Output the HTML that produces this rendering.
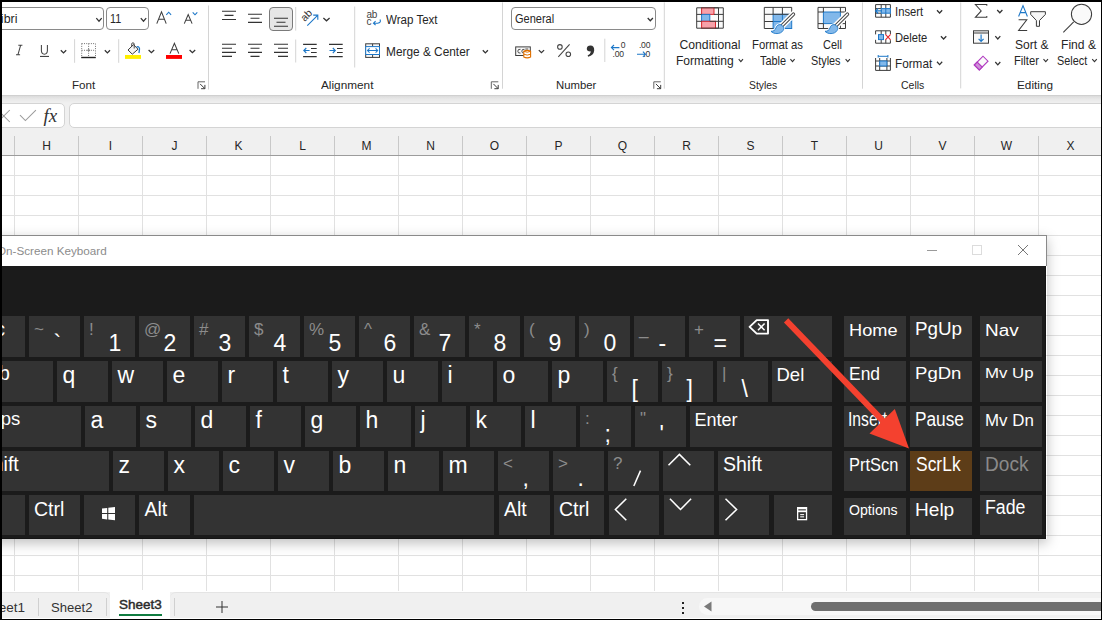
<!DOCTYPE html><html><head><meta charset="utf-8"><style>html,body{margin:0;padding:0}body{width:1102px;height:620px;position:relative;overflow:hidden;background:#fff;font-family:"Liberation Sans",sans-serif}</style></head><body>
<div style="position:absolute;left:14px;top:155px;width:1px;height:436px;background:#e1e1e1"></div>
<div style="position:absolute;left:78px;top:155px;width:1px;height:436px;background:#e1e1e1"></div>
<div style="position:absolute;left:142px;top:155px;width:1px;height:436px;background:#e1e1e1"></div>
<div style="position:absolute;left:206px;top:155px;width:1px;height:436px;background:#e1e1e1"></div>
<div style="position:absolute;left:270px;top:155px;width:1px;height:436px;background:#e1e1e1"></div>
<div style="position:absolute;left:334px;top:155px;width:1px;height:436px;background:#e1e1e1"></div>
<div style="position:absolute;left:398px;top:155px;width:1px;height:436px;background:#e1e1e1"></div>
<div style="position:absolute;left:462px;top:155px;width:1px;height:436px;background:#e1e1e1"></div>
<div style="position:absolute;left:526px;top:155px;width:1px;height:436px;background:#e1e1e1"></div>
<div style="position:absolute;left:590px;top:155px;width:1px;height:436px;background:#e1e1e1"></div>
<div style="position:absolute;left:654px;top:155px;width:1px;height:436px;background:#e1e1e1"></div>
<div style="position:absolute;left:718px;top:155px;width:1px;height:436px;background:#e1e1e1"></div>
<div style="position:absolute;left:782px;top:155px;width:1px;height:436px;background:#e1e1e1"></div>
<div style="position:absolute;left:846px;top:155px;width:1px;height:436px;background:#e1e1e1"></div>
<div style="position:absolute;left:910px;top:155px;width:1px;height:436px;background:#e1e1e1"></div>
<div style="position:absolute;left:974px;top:155px;width:1px;height:436px;background:#e1e1e1"></div>
<div style="position:absolute;left:1038px;top:155px;width:1px;height:436px;background:#e1e1e1"></div>
<div style="position:absolute;left:1102px;top:155px;width:1px;height:436px;background:#e1e1e1"></div>
<div style="position:absolute;left:0;top:175px;width:1102px;height:1px;background:#e1e1e1"></div>
<div style="position:absolute;left:0;top:195px;width:1102px;height:1px;background:#e1e1e1"></div>
<div style="position:absolute;left:0;top:215px;width:1102px;height:1px;background:#e1e1e1"></div>
<div style="position:absolute;left:0;top:235px;width:1102px;height:1px;background:#e1e1e1"></div>
<div style="position:absolute;left:0;top:255px;width:1102px;height:1px;background:#e1e1e1"></div>
<div style="position:absolute;left:0;top:275px;width:1102px;height:1px;background:#e1e1e1"></div>
<div style="position:absolute;left:0;top:295px;width:1102px;height:1px;background:#e1e1e1"></div>
<div style="position:absolute;left:0;top:315px;width:1102px;height:1px;background:#e1e1e1"></div>
<div style="position:absolute;left:0;top:335px;width:1102px;height:1px;background:#e1e1e1"></div>
<div style="position:absolute;left:0;top:355px;width:1102px;height:1px;background:#e1e1e1"></div>
<div style="position:absolute;left:0;top:375px;width:1102px;height:1px;background:#e1e1e1"></div>
<div style="position:absolute;left:0;top:395px;width:1102px;height:1px;background:#e1e1e1"></div>
<div style="position:absolute;left:0;top:415px;width:1102px;height:1px;background:#e1e1e1"></div>
<div style="position:absolute;left:0;top:435px;width:1102px;height:1px;background:#e1e1e1"></div>
<div style="position:absolute;left:0;top:455px;width:1102px;height:1px;background:#e1e1e1"></div>
<div style="position:absolute;left:0;top:475px;width:1102px;height:1px;background:#e1e1e1"></div>
<div style="position:absolute;left:0;top:495px;width:1102px;height:1px;background:#e1e1e1"></div>
<div style="position:absolute;left:0;top:515px;width:1102px;height:1px;background:#e1e1e1"></div>
<div style="position:absolute;left:0;top:535px;width:1102px;height:1px;background:#e1e1e1"></div>
<div style="position:absolute;left:0;top:555px;width:1102px;height:1px;background:#e1e1e1"></div>
<div style="position:absolute;left:0;top:575px;width:1102px;height:1px;background:#e1e1e1"></div>
<div style="position:absolute;left:0;top:95px;width:1102px;height:60px;background:#f0f0f0"></div>
<div style="position:absolute;left:0;top:95px;width:1102px;height:8px;background:linear-gradient(#c8c8c8 0px,#dcdcdc 1.2px,#e8e8e8 4px,#f0f0f0 8px)"></div>
<div style="position:absolute;left:-10px;top:103.3px;width:74.5px;height:25px;background:#fff;border:1px solid #d4d4d4;border-radius:5px;box-sizing:border-box"></div>
<div style="position:absolute;left:69px;top:103.3px;width:1100px;height:25px;background:#fff;border:1px solid #d4d4d4;border-radius:5px;box-sizing:border-box"></div>
<svg style="position:absolute;left:0;top:0" width="70" height="135"><path d="M-2.2 110 L9.8 122 M9.8 110 L-2.2 122" stroke="#9c9c9c" stroke-width="1.05" fill="none"/><path d="M20 115.2 L25.4 120.6 L35.9 110.2" stroke="#9c9c9c" stroke-width="1.05" fill="none"/></svg>
<div style="position:absolute;left:43.5px;top:105.5px;font:italic 19px 'Liberation Serif', serif;color:#333;line-height:1">fx</div>
<div style="position:absolute;left:14.5px;top:140px;width:64px;text-align:center;font:12px 'Liberation Sans', sans-serif;color:#262626;line-height:1">H</div>
<div style="position:absolute;left:78.5px;top:140px;width:64px;text-align:center;font:12px 'Liberation Sans', sans-serif;color:#262626;line-height:1">I</div>
<div style="position:absolute;left:142.5px;top:140px;width:64px;text-align:center;font:12px 'Liberation Sans', sans-serif;color:#262626;line-height:1">J</div>
<div style="position:absolute;left:206.5px;top:140px;width:64px;text-align:center;font:12px 'Liberation Sans', sans-serif;color:#262626;line-height:1">K</div>
<div style="position:absolute;left:270.5px;top:140px;width:64px;text-align:center;font:12px 'Liberation Sans', sans-serif;color:#262626;line-height:1">L</div>
<div style="position:absolute;left:334.5px;top:140px;width:64px;text-align:center;font:12px 'Liberation Sans', sans-serif;color:#262626;line-height:1">M</div>
<div style="position:absolute;left:398.5px;top:140px;width:64px;text-align:center;font:12px 'Liberation Sans', sans-serif;color:#262626;line-height:1">N</div>
<div style="position:absolute;left:462.5px;top:140px;width:64px;text-align:center;font:12px 'Liberation Sans', sans-serif;color:#262626;line-height:1">O</div>
<div style="position:absolute;left:526.5px;top:140px;width:64px;text-align:center;font:12px 'Liberation Sans', sans-serif;color:#262626;line-height:1">P</div>
<div style="position:absolute;left:590.5px;top:140px;width:64px;text-align:center;font:12px 'Liberation Sans', sans-serif;color:#262626;line-height:1">Q</div>
<div style="position:absolute;left:654.5px;top:140px;width:64px;text-align:center;font:12px 'Liberation Sans', sans-serif;color:#262626;line-height:1">R</div>
<div style="position:absolute;left:718.5px;top:140px;width:64px;text-align:center;font:12px 'Liberation Sans', sans-serif;color:#262626;line-height:1">S</div>
<div style="position:absolute;left:782.5px;top:140px;width:64px;text-align:center;font:12px 'Liberation Sans', sans-serif;color:#262626;line-height:1">T</div>
<div style="position:absolute;left:846.5px;top:140px;width:64px;text-align:center;font:12px 'Liberation Sans', sans-serif;color:#262626;line-height:1">U</div>
<div style="position:absolute;left:910.5px;top:140px;width:64px;text-align:center;font:12px 'Liberation Sans', sans-serif;color:#262626;line-height:1">V</div>
<div style="position:absolute;left:974.5px;top:140px;width:64px;text-align:center;font:12px 'Liberation Sans', sans-serif;color:#262626;line-height:1">W</div>
<div style="position:absolute;left:1038.5px;top:140px;width:64px;text-align:center;font:12px 'Liberation Sans', sans-serif;color:#262626;line-height:1">X</div>
<div style="position:absolute;left:14px;top:136px;width:1px;height:19px;background:#c8c8c8"></div>
<div style="position:absolute;left:78px;top:136px;width:1px;height:19px;background:#c8c8c8"></div>
<div style="position:absolute;left:142px;top:136px;width:1px;height:19px;background:#c8c8c8"></div>
<div style="position:absolute;left:206px;top:136px;width:1px;height:19px;background:#c8c8c8"></div>
<div style="position:absolute;left:270px;top:136px;width:1px;height:19px;background:#c8c8c8"></div>
<div style="position:absolute;left:334px;top:136px;width:1px;height:19px;background:#c8c8c8"></div>
<div style="position:absolute;left:398px;top:136px;width:1px;height:19px;background:#c8c8c8"></div>
<div style="position:absolute;left:462px;top:136px;width:1px;height:19px;background:#c8c8c8"></div>
<div style="position:absolute;left:526px;top:136px;width:1px;height:19px;background:#c8c8c8"></div>
<div style="position:absolute;left:590px;top:136px;width:1px;height:19px;background:#c8c8c8"></div>
<div style="position:absolute;left:654px;top:136px;width:1px;height:19px;background:#c8c8c8"></div>
<div style="position:absolute;left:718px;top:136px;width:1px;height:19px;background:#c8c8c8"></div>
<div style="position:absolute;left:782px;top:136px;width:1px;height:19px;background:#c8c8c8"></div>
<div style="position:absolute;left:846px;top:136px;width:1px;height:19px;background:#c8c8c8"></div>
<div style="position:absolute;left:910px;top:136px;width:1px;height:19px;background:#c8c8c8"></div>
<div style="position:absolute;left:974px;top:136px;width:1px;height:19px;background:#c8c8c8"></div>
<div style="position:absolute;left:1038px;top:136px;width:1px;height:19px;background:#c8c8c8"></div>
<div style="position:absolute;left:1102px;top:136px;width:1px;height:19px;background:#c8c8c8"></div>
<div style="position:absolute;left:0;top:155px;width:1102px;height:1px;background:#9c9c9c"></div>
<div style="position:absolute;left:0;top:0;width:1102px;height:95px;background:#fff"></div>
<div style="position:absolute;left:-30px;top:7.2px;width:133.5px;height:23.3px;border:1px solid #8a8a8a;border-radius:4px;box-sizing:border-box;background:#fff"></div>
<div style="position:absolute;left:-17.73px;top:13.00px;font-size:12.4px;line-height:1;color:#262626;white-space:nowrap;">Calibri</div>
<div style="position:absolute;left:106px;top:7.2px;width:42.6px;height:23.3px;border:1px solid #8a8a8a;border-radius:4px;box-sizing:border-box;background:#fff"></div>
<div style="position:absolute;left:109.60px;top:13.00px;font-size:12.4px;line-height:1;color:#262626;white-space:nowrap;transform:scaleX(0.870);transform-origin:0 0;">11</div>
<div style="position:absolute;left:71.60px;top:80.00px;font-size:11.4px;line-height:1;color:#262626;white-space:nowrap;transform:scaleX(1.020);transform-origin:0 0;">Font</div>
<div style="position:absolute;left:269px;top:7px;width:23.5px;height:23.6px;background:#e6e6e6;border:1px solid #7a7a7a;border-radius:4px;box-sizing:border-box"></div>
<div style="position:absolute;left:298.4px;top:6.8px;width:16px;height:16px;transform:rotate(-45deg);transform-origin:50% 50%;font-size:10.5px;line-height:16px;color:#333;text-align:center">ab</div>
<div style="position:absolute;left:366.6px;top:9.6px;font-size:10px;line-height:1;color:#444;letter-spacing:-0.3px">ab</div>
<div style="position:absolute;left:366.6px;top:16.8px;font-size:10px;line-height:1;color:#444">c</div>
<div style="position:absolute;left:385.60px;top:14.00px;font-size:12.3px;line-height:1;color:#262626;white-space:nowrap;transform:scaleX(0.939);transform-origin:0 0;">Wrap Text</div>
<div style="position:absolute;left:385.60px;top:46.00px;font-size:12.2px;line-height:1;color:#262626;white-space:nowrap;transform:scaleX(0.973);transform-origin:0 0;">Merge &amp; Center</div>
<div style="position:absolute;left:321.10px;top:80.00px;font-size:11.4px;line-height:1;color:#262626;white-space:nowrap;transform:scaleX(1.035);transform-origin:0 0;">Alignment</div>
<div style="position:absolute;left:511.2px;top:7.3px;width:145.3px;height:23.1px;border:1px solid #8a8a8a;border-radius:4px;box-sizing:border-box;background:#fff"></div>
<div style="position:absolute;left:514.50px;top:13.00px;font-size:12.3px;line-height:1;color:#262626;white-space:nowrap;transform:scaleX(0.894);transform-origin:0 0;">General</div>
<div style="position:absolute;left:620.8px;top:41.4px;font-size:8.6px;line-height:1;color:#333">0</div>
<div style="position:absolute;left:612.6px;top:49.6px;font-size:8.6px;line-height:1;color:#333;letter-spacing:-0.2px">.00</div>
<div style="position:absolute;left:638.9px;top:41.4px;font-size:8.6px;line-height:1;color:#333;letter-spacing:-0.2px">.00</div>
<div style="position:absolute;left:643.2px;top:49.6px;font-size:8.6px;line-height:1;color:#333;letter-spacing:-0.2px">.0</div>
<div style="position:absolute;left:555.60px;top:80.00px;font-size:11.4px;line-height:1;color:#262626;white-space:nowrap;transform:scaleX(0.993);transform-origin:0 0;">Number</div>
<div style="position:absolute;left:679.50px;top:39.00px;font-size:12.2px;line-height:1;color:#262626;white-space:nowrap;">Conditional</div>
<div style="position:absolute;left:675.50px;top:55.00px;font-size:12.2px;line-height:1;color:#262626;white-space:nowrap;transform:scaleX(0.990);transform-origin:0 0;">Formatting</div>
<div style="position:absolute;left:752.40px;top:39.00px;font-size:12.2px;line-height:1;color:#262626;white-space:nowrap;transform:scaleX(0.929);transform-origin:0 0;">Format as</div>
<div style="position:absolute;left:759.70px;top:55.00px;font-size:12.2px;line-height:1;color:#262626;white-space:nowrap;transform:scaleX(0.896);transform-origin:0 0;">Table</div>
<div style="position:absolute;left:822.60px;top:39.00px;font-size:12.2px;line-height:1;color:#262626;white-space:nowrap;transform:scaleX(0.899);transform-origin:0 0;">Cell</div>
<div style="position:absolute;left:811.00px;top:55.00px;font-size:12.2px;line-height:1;color:#262626;white-space:nowrap;transform:scaleX(0.890);transform-origin:0 0;">Styles</div>
<div style="position:absolute;left:749.30px;top:80.00px;font-size:11.4px;line-height:1;color:#262626;white-space:nowrap;transform:scaleX(0.906);transform-origin:0 0;">Styles</div>
<div style="position:absolute;left:895.40px;top:6.00px;font-size:12.2px;line-height:1;color:#262626;white-space:nowrap;transform:scaleX(0.924);transform-origin:0 0;">Insert</div>
<div style="position:absolute;left:895.40px;top:32.00px;font-size:12.2px;line-height:1;color:#262626;white-space:nowrap;transform:scaleX(0.916);transform-origin:0 0;">Delete</div>
<div style="position:absolute;left:895.40px;top:58.00px;font-size:12.2px;line-height:1;color:#262626;white-space:nowrap;transform:scaleX(0.963);transform-origin:0 0;">Format</div>
<div style="position:absolute;left:900.60px;top:80.00px;font-size:11.4px;line-height:1;color:#262626;white-space:nowrap;transform:scaleX(0.919);transform-origin:0 0;">Cells</div>
<div style="position:absolute;left:1015.10px;top:39.00px;font-size:12.2px;line-height:1;color:#262626;white-space:nowrap;transform:scaleX(0.988);transform-origin:0 0;">Sort &amp;</div>
<div style="position:absolute;left:1013.80px;top:55.00px;font-size:12.2px;line-height:1;color:#262626;white-space:nowrap;transform:scaleX(0.921);transform-origin:0 0;">Filter</div>
<div style="position:absolute;left:1060.60px;top:39.00px;font-size:12.2px;line-height:1;color:#262626;white-space:nowrap;transform:scaleX(0.992);transform-origin:0 0;">Find &amp;</div>
<div style="position:absolute;left:1057.40px;top:55.00px;font-size:12.2px;line-height:1;color:#262626;white-space:nowrap;transform:scaleX(0.891);transform-origin:0 0;">Select</div>
<div style="position:absolute;left:1017.40px;top:80.00px;font-size:11.4px;line-height:1;color:#262626;white-space:nowrap;transform:scaleX(1.033);transform-origin:0 0;">Editing</div>
<svg style="position:absolute;left:0;top:0" width="1102" height="95"><path d="M96.3 18.2 L99.0 21.2 L101.7 18.2" fill="none" stroke="#333" stroke-width="1.25"/><path d="M140.8 18.2 L143.5 21.2 L146.2 18.2" fill="none" stroke="#333" stroke-width="1.25"/><path d="M156.8 23.6 L161.5 11.8 L166.2 23.6 M158.5 19.3 H164.5" fill="none" stroke="#3c3c3c" stroke-width="1.05"/><path d="M166.3 14.8 L168.7 12.2 L171.1 14.8" fill="none" stroke="#1e78c8" stroke-width="1.1"/><path d="M184.3 23.6 L188.2 14.6 L192.1 23.6 M185.7 20.2 H190.7" fill="none" stroke="#3c3c3c" stroke-width="1.05"/><path d="M192.7 12.3 L195 14.8 L197.3 12.3" fill="none" stroke="#1e78c8" stroke-width="1.1"/><path d="M18.3 45.3 H22.4 M16 54.8 H20.1 M20.6 45.3 L17.9 54.8" fill="none" stroke="#444" stroke-width="1.05"/><path d="M41.4 45 V50.6 Q41.4 54.2 44.4 54.2 Q47.4 54.2 47.4 50.6 V45" fill="none" stroke="#444" stroke-width="1.05"/><rect x="40" y="55.9" width="9" height="1.1" fill="#444"/><path d="M60.8 50.2 L63.5 52.9 L66.2 50.2" fill="none" stroke="#333" stroke-width="1.25"/><rect x="74.1" y="39.2" width="1" height="23.6" fill="#d4d4d4"/><path d="M81.7 43.6 H95.5 V56.5 M81.7 43.6 V56.5 M88.6 43.6 V56.5 M81.7 50.3 H95.5" fill="none" stroke="#555" stroke-width="0.9" stroke-dasharray="0.9 1.4"/><circle cx="88.6" cy="50.3" r="0.9" fill="none" stroke="#555" stroke-width="0.6"/><rect x="81.2" y="56.8" width="14.6" height="1.4" fill="#222"/><path d="M104.8 50.2 L107.4 52.9 L110 50.2" fill="none" stroke="#333" stroke-width="1.25"/><rect x="118.2" y="39.2" width="1" height="23.6" fill="#d4d4d4"/><path d="M128 50 L133.5 44.6 L138 49.2 L132.3 54.2 Z" fill="#f4f4f4" stroke="#3c3c3c" stroke-width="1"/><path d="M131.7 46.3 V43.9 Q131.8 42.7 133 42.8 Q134.2 42.9 134.2 44 V48.5" fill="none" stroke="#3c3c3c" stroke-width="0.9"/><path d="M136.6 47.3 Q138.6 45.6 139.5 48.6 Q139.4 51 138.9 53" fill="none" stroke="#1e78c8" stroke-width="1.3"/><rect x="125" y="55" width="16" height="3.9" fill="#ffef00"/><path d="M148.6 50 L151.39999999999998 52.7 L154.2 50" fill="none" stroke="#333" stroke-width="1.25"/><path d="M170 53.6 L174.4 43.3 L178.8 53.6 M171.6 49.8 H177.2" fill="none" stroke="#3c3c3c" stroke-width="1.05"/><rect x="166" y="55" width="16" height="3.9" fill="#ff0000"/><path d="M189.6 50 L192.39999999999998 52.7 L195.2 50" fill="none" stroke="#333" stroke-width="1.25"/><path d="M198.0 88.8 V81.8 H205.0" fill="none" stroke="#555" stroke-width="0.9"/><path d="M200.1 83.89999999999999 L204.8 88.6 M201.1 88.7 H204.9 V84.89999999999999" fill="none" stroke="#333" stroke-width="0.95"/><rect x="208" y="5.5" width="1" height="84" fill="#d4d4d4"/><path d="M222 11.3 H236 M224.5 15.4 H233.5 M222 19.5 H236" stroke="#333" stroke-width="1.1" fill="none"/><path d="M248 14.2 H262 M250.5 18.3 H259.5 M248 22.4 H262" stroke="#333" stroke-width="1.1" fill="none"/><path d="M274 18.2 H288 M276.5 22.2 H285.5 M274 26.2 H288" stroke="#333" stroke-width="1.1" fill="none"/><rect x="295.2" y="7" width="1" height="23.6" fill="#d4d4d4"/><path d="M307.3 25.6 L317.6 15.3 M313.2 15.1 H317.8 V19.7" fill="none" stroke="#1e78c8" stroke-width="1.1"/><path d="M323.4 18 L326.5 20.8 L329.6 18" fill="none" stroke="#333" stroke-width="1.25"/><path d="M222 44.3 H236 M222 48.3 H232 M222 52.4 H236 M222 56.4 H232" stroke="#333" stroke-width="1.1" fill="none"/><path d="M248 44.3 H262 M250.5 48.3 H259.5 M248 52.4 H262 M250.5 56.4 H259.5" stroke="#333" stroke-width="1.1" fill="none"/><path d="M274 44.3 H288 M278 48.3 H288 M274 52.4 H288 M278 56.4 H288" stroke="#333" stroke-width="1.1" fill="none"/><rect x="295.2" y="39.5" width="1" height="23" fill="#d4d4d4"/><path d="M303.1 44.4 H316.7 M311 48.5 H316.7 M311 52.5 H316.7 M303.1 56.6 H316.7" stroke="#333" stroke-width="1.1" fill="none"/><path d="M303.8 50.5 H309.6 M306.3 48 L303.8 50.5 L306.3 53" fill="none" stroke="#1e78c8" stroke-width="1.1"/><path d="M329 44.4 H342.7 M337 48.5 H342.7 M337 52.5 H342.7 M329 56.6 H342.7" stroke="#333" stroke-width="1.1" fill="none"/><path d="M329.5 50.5 H335.3 M332.8 48 L335.3 50.5 L332.8 53" fill="none" stroke="#1e78c8" stroke-width="1.1"/><rect x="354.2" y="6.5" width="1" height="61" fill="#d4d4d4"/><path d="M380 19.4 Q381.5 22.8 377.6 23.2 H373.6 M375.6 21.2 L373.5 23.2 L375.6 25.2" fill="none" stroke="#1e78c8" stroke-width="1.15"/><rect x="365.7" y="43.8" width="13.8" height="13.6" fill="#f8f8f8" stroke="#3c3c3c" stroke-width="1"/><path d="M372.6 43.8 V46.6 M372.6 54.5 V57.4" stroke="#3c3c3c" stroke-width="1"/><rect x="365.7" y="46.6" width="13.8" height="7.9" fill="#fff" stroke="#1e78c8" stroke-width="1"/><path d="M367.5 50.5 H377.7 M369.6 48.4 L367.5 50.5 L369.6 52.6 M375.6 48.4 L377.7 50.5 L375.6 52.6" fill="none" stroke="#1e78c8" stroke-width="1.05"/><path d="M482.8 50.2 L485.35 52.9 L487.9 50.2" fill="none" stroke="#333" stroke-width="1.25"/><path d="M491.3 88.8 V81.8 H498.3" fill="none" stroke="#555" stroke-width="0.9"/><path d="M493.40000000000003 83.89999999999999 L498.1 88.6 M494.40000000000003 88.7 H498.2 V84.89999999999999" fill="none" stroke="#333" stroke-width="0.95"/><rect x="502" y="2.4" width="1" height="86.3" fill="#d4d4d4"/><path d="M647.7 18 L650.3 20.8 L652.9 18" fill="none" stroke="#333" stroke-width="1.25"/><rect x="515.7" y="46.9" width="14.6" height="8.6" fill="#fafafa" stroke="#3c3c3c" stroke-width="1"/><path d="M520.5 49.3 Q517.8 48.9 517.8 51.2 Q517.8 53.4 520.5 53.1 M524.5 49.3 Q521.8 48.9 521.8 51.2 Q521.8 53.4 524.5 53.1 M525.3 49 H528.3" fill="none" stroke="#3c3c3c" stroke-width="0.9"/><path d="M523.8 51.3 Q527.2 49.5 530.6 51.3 V57 Q527.2 58.8 523.8 57 Z" fill="#fff" stroke="#e07000" stroke-width="1.1"/><path d="M523.8 51.3 Q527.2 53.1 530.6 51.3 M523.8 54.2 Q527.2 56 530.6 54.2" fill="none" stroke="#e07000" stroke-width="1"/><path d="M538.8 50.1 L541.45 52.7 L544.1 50.1" fill="none" stroke="#333" stroke-width="1.25"/><circle cx="559.9" cy="46.9" r="2.3" fill="none" stroke="#444" stroke-width="1.05"/><circle cx="568.3" cy="54.2" r="2.3" fill="none" stroke="#444" stroke-width="1.05"/><path d="M569.6 44.3 L558.3 56.8" stroke="#444" stroke-width="1.05"/><path d="M590.4 45.6 Q594.4 45.6 594.2 50.4 Q593.8 55 588.2 56.8 L587.6 55.6 Q590.6 54 591 51.6 Q586.6 51.8 586.8 48.6 Q587 45.6 590.4 45.6 Z" fill="#333"/><rect x="604.3" y="38.7" width="1" height="23.3" fill="#d4d4d4"/><path d="M611.4 47.6 H619.4 M614 45 L611.4 47.6 L614 50.2" fill="none" stroke="#1e78c8" stroke-width="1.1"/><path d="M637 54.3 H645.5 M642.9 51.7 L645.5 54.3 L642.9 56.9" fill="none" stroke="#1e78c8" stroke-width="1.1"/><path d="M653.8 88.8 V81.8 H660.8" fill="none" stroke="#555" stroke-width="0.9"/><path d="M655.9 83.89999999999999 L660.5999999999999 88.6 M656.9 88.7 H660.6999999999999 V84.89999999999999" fill="none" stroke="#333" stroke-width="0.95"/><rect x="663.8" y="2.4" width="1" height="86.3" fill="#d4d4d4"/><rect x="696.7" y="7.8" width="26.6" height="20.4" fill="#fafafa"/><rect x="701.6" y="7.8" width="12.4" height="6.6" fill="#f7a1a9" stroke="#d9262c" stroke-width="1"/><rect x="701.6" y="14.4" width="8.2" height="6.9" fill="#82b8ea" stroke="#1e78c8" stroke-width="1"/><rect x="701.6" y="21.3" width="13.9" height="6.9" fill="#f7a1a9" stroke="#d9262c" stroke-width="1"/><path d="M696.7 7.8 H723.3 V28.2 H696.7 Z M696.7 14.4 H701.6 M714 14.4 H723.3 M696.7 21.3 H701.6 M709.8 21.3 H723.3 M718.5 7.8 V28.2" fill="none" stroke="#3c3c3c" stroke-width="1"/><path d="M714 7.8 H718.5 M715.5 28.2 H718.5" fill="none" stroke="#3c3c3c" stroke-width="1"/><path d="M738.7 59.2 L740.85 61.6 L743 59.2" fill="none" stroke="#333" stroke-width="1.1"/><rect x="764.3" y="7.4" width="27.4" height="21.1" fill="#fafafa"/><rect x="773.1" y="14.3" width="18.6" height="14.2" fill="#82b8ea" stroke="#1e78c8" stroke-width="1"/><path d="M782.4 14.3 V28.5 M773.1 21.5 H791.7" stroke="#1e78c8" stroke-width="1"/><path d="M773.1 28.5 H764.3 V7.4 H791.7 V14.3 M764.3 14.3 H773.1 M764.3 21.5 H773.1 M773.1 7.4 V14.3 M782.4 7.4 V14.3 M773.1 14.3 H791.7" fill="none" stroke="#3c3c3c" stroke-width="1"/><path d="M793.4 14.2 L781.4 26.3" stroke="#fff" stroke-width="6.5" stroke-linecap="round"/><path d="M782.8 26.2 C781 23.6 777 24.2 776 27.8 C775.2 30.4 773.4 31.4 771 31.3 C773.5 34.3 780.6 34.6 783 30.6 C784 29 784.2 27.6 782.8 26.2 Z" fill="#fff" stroke="#fff" stroke-width="2.4"/><path d="M793.4 14.2 L781.4 26.3" stroke="#4a4a4a" stroke-width="3.6" stroke-linecap="round"/><path d="M793.4 14.2 L781.4 26.3" stroke="#fff" stroke-width="1.6" stroke-linecap="round"/><path d="M782.8 26.2 C781 23.6 777 24.2 776 27.8 C775.2 30.4 773.4 31.4 771 31.3 C773.5 34.3 780.6 34.6 783 30.6 C784 29 784.2 27.6 782.8 26.2 Z" fill="#82b8ea" stroke="#1e78c8" stroke-width="0.9"/><path d="M790.4 59.2 L792.5 61.6 L794.6 59.2" fill="none" stroke="#333" stroke-width="1.1"/><rect x="818" y="7.4" width="27.5" height="21.1" fill="#fafafa"/><rect x="823.4" y="12" width="17" height="11.6" fill="#82b8ea" stroke="#1e78c8" stroke-width="1"/><path d="M818 7.4 H845.5 V28.5 H818 Z M818 12 H823.4 M840.4 12 H845.5 M818 23.6 H823.4 M840.4 23.6 H845.5 M823.4 7.4 V12 M840.4 7.4 V12 M823.4 23.6 V28.5 M840.4 23.6 V28.5" fill="none" stroke="#3c3c3c" stroke-width="1"/><path d="M847.4 14.2 L835.4 26.3" stroke="#fff" stroke-width="6.5" stroke-linecap="round"/><path d="M836.8 26.2 C835 23.6 831 24.2 830 27.8 C829.2 30.4 827.4 31.4 825 31.3 C827.5 34.3 834.6 34.6 837 30.6 C838 29 838.2 27.6 836.8 26.2 Z" fill="#fff" stroke="#fff" stroke-width="2.4"/><path d="M847.4 14.2 L835.4 26.3" stroke="#4a4a4a" stroke-width="3.6" stroke-linecap="round"/><path d="M847.4 14.2 L835.4 26.3" stroke="#fff" stroke-width="1.6" stroke-linecap="round"/><path d="M836.8 26.2 C835 23.6 831 24.2 830 27.8 C829.2 30.4 827.4 31.4 825 31.3 C827.5 34.3 834.6 34.6 837 30.6 C838 29 838.2 27.6 836.8 26.2 Z" fill="#82b8ea" stroke="#1e78c8" stroke-width="0.9"/><path d="M845.6 59.2 L847.75 61.6 L849.9 59.2" fill="none" stroke="#333" stroke-width="1.1"/><rect x="862" y="2.4" width="1" height="86.3" fill="#d4d4d4"/><path d="M875.6 4.6 H890.4 M875.6 17.2 H890.4 M875.6 4.6 V17.2 M890.4 4.6 V8.6 M890.4 13.2 V17.2 M881.2 4.6 V8.6 M885.8 4.6 V8.6 M881.2 13.2 V17.2 M885.8 13.2 V17.2 M875.6 8.6 H881 M875.6 13.2 H881" fill="none" stroke="#3c3c3c" stroke-width="1"/><rect x="881.2" y="8.6" width="9.2" height="4.6" fill="#82b8ea" stroke="#1e78c8" stroke-width="1"/><path d="M885.8 8.6 V13.2" stroke="#1e78c8" stroke-width="1"/><path d="M875.6 10.9 H882 M878.2 8.3 L875.6 10.9 L878.2 13.5" fill="none" stroke="#1e78c8" stroke-width="1.2"/><path d="M937 10.3 L939.6 13 L942.2 10.3" fill="none" stroke="#333" stroke-width="1.25"/><path d="M875.6 30.8 H890.4 M875.6 43.2 H890.4 M875.6 30.8 V34.4 M875.6 39.8 V43.2 M881.2 30.8 V34.4 M885.8 30.8 V34.4 M881.2 39.8 V43.2 M885.8 39.8 V43.2 M890.4 30.8 V34 M890.4 40.2 V43.2" fill="none" stroke="#3c3c3c" stroke-width="1"/><rect x="878.5" y="34.6" width="5" height="5" fill="#82b8ea" stroke="#1e78c8" stroke-width="1"/><path d="M885.4 34.4 L890.6 39.8 M890.6 34.4 L885.4 39.8" stroke="#e8262c" stroke-width="1.1"/><path d="M940.9 36.2 L943.5999999999999 39 L946.3 36.2" fill="none" stroke="#333" stroke-width="1.25"/><path d="M878.2 56.3 H887.9 M878.2 55 V57.6 M887.9 55 V57.6" stroke="#1e78c8" stroke-width="1"/><path d="M875.6 58 V70.4 H890.4 V58 M875.6 61 H890.4 M875.6 66 H890.4 M879.7 58 V70.4 M886.9 58 V70.4" fill="none" stroke="#3c3c3c" stroke-width="1"/><rect x="879.7" y="61" width="7.2" height="5" fill="#82b8ea" stroke="#1e78c8" stroke-width="1"/><path d="M937 61.8 L939.6 64.6 L942.2 61.8" fill="none" stroke="#333" stroke-width="1.25"/><rect x="960.2" y="2.4" width="1" height="86" fill="#d4d4d4"/><path d="M986.8 5.8 V4.5 H975.4 L981.2 10.9 L975.4 17.3 H986.8 V16" fill="none" stroke="#3c3c3c" stroke-width="1.05"/><path d="M997.2 10 L999.8 12.8 L1002.4 10" fill="none" stroke="#333" stroke-width="1.25"/><rect x="973.5" y="30.8" width="15" height="12.4" fill="#fafafa" stroke="#3c3c3c" stroke-width="1"/><path d="M973.5 33 H988.5" stroke="#3c3c3c" stroke-width="1"/><path d="M981.1 34.4 V41.4 M978.6 38.9 L981.1 41.4 L983.6 38.9" fill="none" stroke="#1e78c8" stroke-width="1.15"/><path d="M995.3 36.2 L997.8 39 L1000.3 36.2" fill="none" stroke="#333" stroke-width="1.25"/><path d="M974.3 65 L983 56.2 L988 61.2 L979.3 70 Z" fill="#fafafa" stroke="#b03ac0" stroke-width="1.1"/><path d="M974.3 65 L977.2 62.1 L982.2 67.1 L979.3 70 Z" fill="#cf8fd9" stroke="#b03ac0" stroke-width="1.1"/><path d="M995.3 62 L997.8 64.8 L1000.3 62" fill="none" stroke="#333" stroke-width="1.25"/><path d="M1018.6 16.5 L1023 5.6 L1027.4 16.5 M1020.1 12.6 H1025.9" fill="none" stroke="#1e78c8" stroke-width="1.1"/><path d="M1018.6 19.7 H1026.8 L1018.6 30.5 H1027.2" fill="none" stroke="#3c3c3c" stroke-width="1.05"/><path d="M1030.7 11.7 H1045.4 V14.4 L1039.5 20.5 V26.3 H1036.4 V20.5 L1030.7 14.4 Z" fill="#f7f7f7" stroke="#3c3c3c" stroke-width="1"/><path d="M1043.5 59.2 L1045.75 61.6 L1048 59.2" fill="none" stroke="#333" stroke-width="1.1"/><circle cx="1081.5" cy="14.3" r="10.1" fill="#fafafa" stroke="#3c3c3c" stroke-width="1.05"/><path d="M1073.7 21.9 L1063.3 32.4" stroke="#3c3c3c" stroke-width="1.05"/><path d="M1092.2 59.2 L1094.5 61.6 L1096.8 59.2" fill="none" stroke="#333" stroke-width="1.1"/></svg>
<div style="position:absolute;left:0;top:591.5px;width:1102px;height:30px;background:#f0f0f0"></div>
<div style="position:absolute;left:-10px;top:591.5px;width:120px;height:30px;background:#f0f0f0;border-top-right-radius:6px;border-top:1px solid #e4e4e4"></div>
<div style="position:absolute;left:110px;top:590px;width:60px;height:30px;background:#fff"></div>
<div style="position:absolute;left:170px;top:591.5px;width:940px;height:30px;background:#f0f0f0;border-top-left-radius:6px;border-top:1px solid #e4e4e4"></div>
<div style="position:absolute;left:-17.75px;top:601.00px;font-size:13.5px;line-height:1;color:#333;white-space:nowrap;">Sheet1</div>
<div style="position:absolute;left:51.20px;top:601.00px;font-size:13.5px;line-height:1;color:#333;white-space:nowrap;transform:scaleX(0.968);transform-origin:0 0;">Sheet2</div>
<div style="position:absolute;left:119.00px;top:598.00px;font-size:13.5px;line-height:1;color:#2a2a2a;white-space:nowrap;-webkit-text-stroke:0.45px #2a2a2a;">Sheet3</div>
<div style="position:absolute;left:119px;top:614px;width:43px;height:2px;background:#107c41"></div>
<div style="position:absolute;left:38px;top:598px;width:1px;height:18px;background:#d0d0d0"></div>
<div style="position:absolute;left:106px;top:598px;width:1px;height:18px;background:#d0d0d0"></div>
<div style="position:absolute;left:174px;top:598px;width:1px;height:18px;background:#d0d0d0"></div>
<svg style="position:absolute;left:215px;top:600px" width="14" height="14"><path d="M7 1 V13 M1 7 H13" stroke="#333" stroke-width="1"/></svg>
<svg style="position:absolute;left:680px;top:601px" width="6" height="14"><rect x="2" y="1" width="2" height="2" fill="#222"/><rect x="2" y="6" width="2" height="2" fill="#222"/><rect x="2" y="11" width="2" height="2" fill="#222"/></svg>
<div style="position:absolute;left:699px;top:598px;width:420px;height:16.5px;background:#f7f7f7;border-radius:9px"></div>
<svg style="position:absolute;left:703px;top:601px" width="10" height="11"><path d="M8.5 0.5 V10.5 L1 5.5 Z" fill="#7a7a7a"/></svg>
<div style="position:absolute;left:810.5px;top:602px;width:320px;height:9px;background:#6f6f6f;border-radius:5px"></div>
<div style="position:absolute;left:-20px;top:235px;width:1066.5px;height:303.5px;box-shadow:0 4px 12px rgba(0,0,0,0.26)"></div>
<div style="position:absolute;left:-20px;top:235px;width:1066.5px;height:31px;background:#fff;border-top:1px solid #8a8a8a;border-right:1px solid #8a8a8a;box-sizing:border-box"></div>
<div style="position:absolute;left:-20px;top:266px;width:1066px;height:272.5px;background:#1b1b1b;border-bottom:1px solid #141414;border-right:1px solid #151515;box-sizing:border-box"></div>
<div style="position:absolute;left:-3.08px;top:245.00px;font-size:11.7px;line-height:1;color:#8c8c8c;white-space:nowrap;">On-Screen Keyboard</div>
<svg style="position:absolute;left:920px;top:240px" width="120" height="22"><path d="M7 10.5 H17" stroke="#9a9a9a" stroke-width="1"/><rect x="52.5" y="5.5" width="9" height="9" fill="none" stroke="#dcdcdc" stroke-width="1"/><path d="M98 5 L108 15 M108 5 L98 15" stroke="#777" stroke-width="1"/></svg>
<div style="position:absolute;left:-10px;top:316px;width:35px;height:40.7px;background:#333333"></div>
<div style="position:absolute;left:-27.50px;top:320.00px;font-size:19.5px;line-height:1;color:#fff;white-space:nowrap;">Esc</div>
<div style="position:absolute;left:29px;top:316px;width:51px;height:40.7px;background:#333333"></div>
<div style="position:absolute;left:34.00px;top:321.00px;font-size:17px;line-height:1;color:#8c8c8c;white-space:nowrap;">~</div>
<div style="position:absolute;left:53.50px;top:332.00px;font-size:23px;line-height:1;color:#fff;white-space:nowrap;">`</div>
<div style="position:absolute;left:84px;top:316px;width:51px;height:40.7px;background:#333333"></div>
<div style="position:absolute;left:89.00px;top:321.00px;font-size:17px;line-height:1;color:#8c8c8c;white-space:nowrap;">!</div>
<div style="position:absolute;left:108.50px;top:332.00px;font-size:23px;line-height:1;color:#fff;white-space:nowrap;">1</div>
<div style="position:absolute;left:139px;top:316px;width:51px;height:40.7px;background:#333333"></div>
<div style="position:absolute;left:144.00px;top:321.00px;font-size:17px;line-height:1;color:#8c8c8c;white-space:nowrap;">@</div>
<div style="position:absolute;left:163.50px;top:332.00px;font-size:23px;line-height:1;color:#fff;white-space:nowrap;">2</div>
<div style="position:absolute;left:194px;top:316px;width:51px;height:40.7px;background:#333333"></div>
<div style="position:absolute;left:199.00px;top:321.00px;font-size:17px;line-height:1;color:#8c8c8c;white-space:nowrap;">#</div>
<div style="position:absolute;left:218.50px;top:332.00px;font-size:23px;line-height:1;color:#fff;white-space:nowrap;">3</div>
<div style="position:absolute;left:249px;top:316px;width:51px;height:40.7px;background:#333333"></div>
<div style="position:absolute;left:254.00px;top:321.00px;font-size:17px;line-height:1;color:#8c8c8c;white-space:nowrap;">$</div>
<div style="position:absolute;left:273.50px;top:332.00px;font-size:23px;line-height:1;color:#fff;white-space:nowrap;">4</div>
<div style="position:absolute;left:304px;top:316px;width:51px;height:40.7px;background:#333333"></div>
<div style="position:absolute;left:309.00px;top:321.00px;font-size:17px;line-height:1;color:#8c8c8c;white-space:nowrap;">%</div>
<div style="position:absolute;left:328.50px;top:332.00px;font-size:23px;line-height:1;color:#fff;white-space:nowrap;">5</div>
<div style="position:absolute;left:359px;top:316px;width:51px;height:40.7px;background:#333333"></div>
<div style="position:absolute;left:364.00px;top:321.00px;font-size:17px;line-height:1;color:#8c8c8c;white-space:nowrap;">^</div>
<div style="position:absolute;left:383.50px;top:332.00px;font-size:23px;line-height:1;color:#fff;white-space:nowrap;">6</div>
<div style="position:absolute;left:414px;top:316px;width:51px;height:40.7px;background:#333333"></div>
<div style="position:absolute;left:419.00px;top:321.00px;font-size:17px;line-height:1;color:#8c8c8c;white-space:nowrap;">&amp;</div>
<div style="position:absolute;left:438.50px;top:332.00px;font-size:23px;line-height:1;color:#fff;white-space:nowrap;">7</div>
<div style="position:absolute;left:469px;top:316px;width:51px;height:40.7px;background:#333333"></div>
<div style="position:absolute;left:474.00px;top:321.00px;font-size:17px;line-height:1;color:#8c8c8c;white-space:nowrap;">*</div>
<div style="position:absolute;left:493.50px;top:332.00px;font-size:23px;line-height:1;color:#fff;white-space:nowrap;">8</div>
<div style="position:absolute;left:524px;top:316px;width:51px;height:40.7px;background:#333333"></div>
<div style="position:absolute;left:529.00px;top:321.00px;font-size:17px;line-height:1;color:#8c8c8c;white-space:nowrap;">(</div>
<div style="position:absolute;left:548.50px;top:332.00px;font-size:23px;line-height:1;color:#fff;white-space:nowrap;">9</div>
<div style="position:absolute;left:579px;top:316px;width:51px;height:40.7px;background:#333333"></div>
<div style="position:absolute;left:584.00px;top:321.00px;font-size:17px;line-height:1;color:#8c8c8c;white-space:nowrap;">)</div>
<div style="position:absolute;left:603.50px;top:332.00px;font-size:23px;line-height:1;color:#fff;white-space:nowrap;">0</div>
<div style="position:absolute;left:634px;top:316px;width:51px;height:40.7px;background:#333333"></div>
<div style="position:absolute;left:639.00px;top:321.00px;font-size:17px;line-height:1;color:#8c8c8c;white-space:nowrap;">_</div>
<div style="position:absolute;left:658.50px;top:332.00px;font-size:23px;line-height:1;color:#fff;white-space:nowrap;">-</div>
<div style="position:absolute;left:689px;top:316px;width:51px;height:40.7px;background:#333333"></div>
<div style="position:absolute;left:694.00px;top:321.00px;font-size:17px;line-height:1;color:#8c8c8c;white-space:nowrap;">+</div>
<div style="position:absolute;left:713.50px;top:332.00px;font-size:23px;line-height:1;color:#fff;white-space:nowrap;">=</div>
<div style="position:absolute;left:744px;top:316px;width:88px;height:40.7px;background:#333333"></div>
<svg style="position:absolute;left:748px;top:318px" width="24" height="18"><path d="M8.7 2.1 H20 V15.6 H8.7 L1.6 8.85 Z" fill="none" stroke="#fff" stroke-width="1.9" stroke-linejoin="round"/><path d="M10 5.5 L16.6 12.2 M16.6 5.5 L10 12.2" stroke="#fff" stroke-width="1.5"/></svg>
<div style="position:absolute;left:-10px;top:361px;width:63px;height:40.7px;background:#333333"></div>
<div style="position:absolute;left:-21.50px;top:364.00px;font-size:19.5px;line-height:1;color:#fff;white-space:nowrap;">Tab</div>
<div style="position:absolute;left:57px;top:361px;width:51px;height:40.7px;background:#333333"></div>
<div style="position:absolute;left:62.50px;top:364.00px;font-size:23px;line-height:1;color:#fff;white-space:nowrap;">q</div>
<div style="position:absolute;left:112px;top:361px;width:51px;height:40.7px;background:#333333"></div>
<div style="position:absolute;left:117.50px;top:364.00px;font-size:23px;line-height:1;color:#fff;white-space:nowrap;">w</div>
<div style="position:absolute;left:167px;top:361px;width:51px;height:40.7px;background:#333333"></div>
<div style="position:absolute;left:172.50px;top:364.00px;font-size:23px;line-height:1;color:#fff;white-space:nowrap;">e</div>
<div style="position:absolute;left:222px;top:361px;width:51px;height:40.7px;background:#333333"></div>
<div style="position:absolute;left:227.50px;top:364.00px;font-size:23px;line-height:1;color:#fff;white-space:nowrap;">r</div>
<div style="position:absolute;left:277px;top:361px;width:51px;height:40.7px;background:#333333"></div>
<div style="position:absolute;left:282.50px;top:364.00px;font-size:23px;line-height:1;color:#fff;white-space:nowrap;">t</div>
<div style="position:absolute;left:332px;top:361px;width:51px;height:40.7px;background:#333333"></div>
<div style="position:absolute;left:337.50px;top:364.00px;font-size:23px;line-height:1;color:#fff;white-space:nowrap;">y</div>
<div style="position:absolute;left:387px;top:361px;width:51px;height:40.7px;background:#333333"></div>
<div style="position:absolute;left:392.50px;top:364.00px;font-size:23px;line-height:1;color:#fff;white-space:nowrap;">u</div>
<div style="position:absolute;left:442px;top:361px;width:51px;height:40.7px;background:#333333"></div>
<div style="position:absolute;left:447.50px;top:364.00px;font-size:23px;line-height:1;color:#fff;white-space:nowrap;">i</div>
<div style="position:absolute;left:497px;top:361px;width:51px;height:40.7px;background:#333333"></div>
<div style="position:absolute;left:502.50px;top:364.00px;font-size:23px;line-height:1;color:#fff;white-space:nowrap;">o</div>
<div style="position:absolute;left:552px;top:361px;width:51px;height:40.7px;background:#333333"></div>
<div style="position:absolute;left:557.50px;top:364.00px;font-size:23px;line-height:1;color:#fff;white-space:nowrap;">p</div>
<div style="position:absolute;left:607px;top:361px;width:51px;height:40.7px;background:#333333"></div>
<div style="position:absolute;left:612.00px;top:365.00px;font-size:17px;line-height:1;color:#8c8c8c;white-space:nowrap;">{</div>
<div style="position:absolute;left:631.50px;top:378.00px;font-size:23px;line-height:1;color:#fff;white-space:nowrap;">[</div>
<div style="position:absolute;left:662px;top:361px;width:51px;height:40.7px;background:#333333"></div>
<div style="position:absolute;left:667.00px;top:365.00px;font-size:17px;line-height:1;color:#8c8c8c;white-space:nowrap;">}</div>
<div style="position:absolute;left:686.50px;top:378.00px;font-size:23px;line-height:1;color:#fff;white-space:nowrap;">]</div>
<div style="position:absolute;left:717px;top:361px;width:51px;height:40.7px;background:#333333"></div>
<div style="position:absolute;left:722.00px;top:365.00px;font-size:17px;line-height:1;color:#8c8c8c;white-space:nowrap;">|</div>
<div style="position:absolute;left:741.50px;top:378.00px;font-size:23px;line-height:1;color:#fff;white-space:nowrap;">\</div>
<div style="position:absolute;left:772px;top:361px;width:60px;height:40.7px;background:#333333"></div>
<div style="position:absolute;left:776.50px;top:366.00px;font-size:18.5px;line-height:1;color:#fff;white-space:nowrap;">Del</div>
<div style="position:absolute;left:-10px;top:406px;width:91px;height:40.7px;background:#333333"></div>
<div style="position:absolute;left:-22.95px;top:410.00px;font-size:18.5px;line-height:1;color:#fff;white-space:nowrap;">Caps</div>
<div style="position:absolute;left:85px;top:406px;width:51px;height:40.7px;background:#333333"></div>
<div style="position:absolute;left:90.50px;top:409.00px;font-size:23px;line-height:1;color:#fff;white-space:nowrap;">a</div>
<div style="position:absolute;left:140px;top:406px;width:51px;height:40.7px;background:#333333"></div>
<div style="position:absolute;left:145.50px;top:409.00px;font-size:23px;line-height:1;color:#fff;white-space:nowrap;">s</div>
<div style="position:absolute;left:195px;top:406px;width:51px;height:40.7px;background:#333333"></div>
<div style="position:absolute;left:200.50px;top:409.00px;font-size:23px;line-height:1;color:#fff;white-space:nowrap;">d</div>
<div style="position:absolute;left:250px;top:406px;width:51px;height:40.7px;background:#333333"></div>
<div style="position:absolute;left:255.50px;top:409.00px;font-size:23px;line-height:1;color:#fff;white-space:nowrap;">f</div>
<div style="position:absolute;left:305px;top:406px;width:51px;height:40.7px;background:#333333"></div>
<div style="position:absolute;left:310.50px;top:409.00px;font-size:23px;line-height:1;color:#fff;white-space:nowrap;">g</div>
<div style="position:absolute;left:360px;top:406px;width:51px;height:40.7px;background:#333333"></div>
<div style="position:absolute;left:365.50px;top:409.00px;font-size:23px;line-height:1;color:#fff;white-space:nowrap;">h</div>
<div style="position:absolute;left:415px;top:406px;width:51px;height:40.7px;background:#333333"></div>
<div style="position:absolute;left:420.50px;top:409.00px;font-size:23px;line-height:1;color:#fff;white-space:nowrap;">j</div>
<div style="position:absolute;left:470px;top:406px;width:51px;height:40.7px;background:#333333"></div>
<div style="position:absolute;left:475.50px;top:409.00px;font-size:23px;line-height:1;color:#fff;white-space:nowrap;">k</div>
<div style="position:absolute;left:525px;top:406px;width:51px;height:40.7px;background:#333333"></div>
<div style="position:absolute;left:530.50px;top:409.00px;font-size:23px;line-height:1;color:#fff;white-space:nowrap;">l</div>
<div style="position:absolute;left:580px;top:406px;width:51px;height:40.7px;background:#333333"></div>
<div style="position:absolute;left:585.00px;top:410.00px;font-size:17px;line-height:1;color:#8c8c8c;white-space:nowrap;">:</div>
<div style="position:absolute;left:604.50px;top:423.00px;font-size:23px;line-height:1;color:#fff;white-space:nowrap;">;</div>
<div style="position:absolute;left:635px;top:406px;width:51px;height:40.7px;background:#333333"></div>
<div style="position:absolute;left:640.00px;top:410.00px;font-size:17px;line-height:1;color:#8c8c8c;white-space:nowrap;">"</div>
<div style="position:absolute;left:659.50px;top:423.00px;font-size:23px;line-height:1;color:#fff;white-space:nowrap;">'</div>
<div style="position:absolute;left:690px;top:406px;width:142px;height:40.7px;background:#333333"></div>
<div style="position:absolute;left:694.50px;top:411.00px;font-size:18px;line-height:1;color:#fff;white-space:nowrap;">Enter</div>
<div style="position:absolute;left:-10px;top:451px;width:119px;height:40.0px;background:#333333"></div>
<div style="position:absolute;left:-20.30px;top:455.00px;font-size:19.5px;line-height:1;color:#fff;white-space:nowrap;">Shift</div>
<div style="position:absolute;left:113px;top:451px;width:51px;height:40.0px;background:#333333"></div>
<div style="position:absolute;left:118.50px;top:454.00px;font-size:23px;line-height:1;color:#fff;white-space:nowrap;">z</div>
<div style="position:absolute;left:168px;top:451px;width:51px;height:40.0px;background:#333333"></div>
<div style="position:absolute;left:173.50px;top:454.00px;font-size:23px;line-height:1;color:#fff;white-space:nowrap;">x</div>
<div style="position:absolute;left:223px;top:451px;width:51px;height:40.0px;background:#333333"></div>
<div style="position:absolute;left:228.50px;top:454.00px;font-size:23px;line-height:1;color:#fff;white-space:nowrap;">c</div>
<div style="position:absolute;left:278px;top:451px;width:51px;height:40.0px;background:#333333"></div>
<div style="position:absolute;left:283.50px;top:454.00px;font-size:23px;line-height:1;color:#fff;white-space:nowrap;">v</div>
<div style="position:absolute;left:333px;top:451px;width:51px;height:40.0px;background:#333333"></div>
<div style="position:absolute;left:338.50px;top:454.00px;font-size:23px;line-height:1;color:#fff;white-space:nowrap;">b</div>
<div style="position:absolute;left:388px;top:451px;width:51px;height:40.0px;background:#333333"></div>
<div style="position:absolute;left:393.50px;top:454.00px;font-size:23px;line-height:1;color:#fff;white-space:nowrap;">n</div>
<div style="position:absolute;left:443px;top:451px;width:51px;height:40.0px;background:#333333"></div>
<div style="position:absolute;left:448.50px;top:454.00px;font-size:23px;line-height:1;color:#fff;white-space:nowrap;">m</div>
<div style="position:absolute;left:498px;top:451px;width:51px;height:40.0px;background:#333333"></div>
<div style="position:absolute;left:503.00px;top:455.00px;font-size:17px;line-height:1;color:#8c8c8c;white-space:nowrap;">&lt;</div>
<div style="position:absolute;left:522.50px;top:467.00px;font-size:23px;line-height:1;color:#fff;white-space:nowrap;">,</div>
<div style="position:absolute;left:553px;top:451px;width:51px;height:40.0px;background:#333333"></div>
<div style="position:absolute;left:558.00px;top:455.00px;font-size:17px;line-height:1;color:#8c8c8c;white-space:nowrap;">&gt;</div>
<div style="position:absolute;left:577.50px;top:467.00px;font-size:23px;line-height:1;color:#fff;white-space:nowrap;">.</div>
<div style="position:absolute;left:608px;top:451px;width:51px;height:40.0px;background:#333333"></div>
<div style="position:absolute;left:613.00px;top:455.00px;font-size:17px;line-height:1;color:#8c8c8c;white-space:nowrap;">?</div>
<svg style="position:absolute;left:0;top:0" width="700" height="500"><path d="M633.8 486 L640.5 470.6" stroke="#fff" stroke-width="1.5"/></svg>
<div style="position:absolute;left:663px;top:451px;width:51px;height:40.0px;background:#333333"></div>
<svg style="position:absolute;left:663px;top:451px" width="51" height="20"><path d="M5.5 14.3 L16.4 3.4 L27.3 14.3" fill="none" stroke="#fff" stroke-width="1.55"/></svg>
<div style="position:absolute;left:718px;top:451px;width:114px;height:40.0px;background:#333333"></div>
<div style="position:absolute;left:723.00px;top:455.00px;font-size:19.5px;line-height:1;color:#fff;white-space:nowrap;">Shift</div>
<div style="position:absolute;left:-10px;top:495px;width:35px;height:39.8px;background:#333333"></div>
<div style="position:absolute;left:29px;top:495px;width:51px;height:39.8px;background:#333333"></div>
<div style="position:absolute;left:34.00px;top:500.00px;font-size:19.5px;line-height:1;color:#fff;white-space:nowrap;">Ctrl</div>
<div style="position:absolute;left:84px;top:495px;width:51px;height:39.8px;background:#333333"></div>
<svg style="position:absolute;left:101px;top:506px" width="15" height="15"><path d="M1 2.6 L6.2 1.9 V7 H1 Z M7.3 1.7 L14 0.9 V7 H7.3 Z M1 8.1 H6.2 V13.4 L1 12.7 Z M7.3 8.1 H14 V14.3 L7.3 13.5 Z" fill="#fff"/></svg>
<div style="position:absolute;left:139px;top:495px;width:51px;height:39.8px;background:#333333"></div>
<div style="position:absolute;left:144.50px;top:500.00px;font-size:19.5px;line-height:1;color:#fff;white-space:nowrap;">Alt</div>
<div style="position:absolute;left:194px;top:495px;width:300px;height:39.8px;background:#333333"></div>
<div style="position:absolute;left:498.5px;top:495px;width:51.0px;height:39.8px;background:#333333"></div>
<div style="position:absolute;left:504.00px;top:500.00px;font-size:19.5px;line-height:1;color:#fff;white-space:nowrap;">Alt</div>
<div style="position:absolute;left:553.8px;top:495px;width:50.5px;height:39.8px;background:#333333"></div>
<div style="position:absolute;left:559.00px;top:500.00px;font-size:19.5px;line-height:1;color:#fff;white-space:nowrap;">Ctrl</div>
<div style="position:absolute;left:608.8px;top:495px;width:50.700000000000045px;height:39.8px;background:#333333"></div>
<svg style="position:absolute;left:608px;top:495px" width="51" height="30"><path d="M18.3 3.7 L7.4 14.5 L18.3 25.3" fill="none" stroke="#fff" stroke-width="1.55"/></svg>
<div style="position:absolute;left:663.8px;top:495px;width:50.5px;height:39.8px;background:#333333"></div>
<svg style="position:absolute;left:663px;top:495px" width="51" height="20"><path d="M6.9 3.7 L17.5 14.5 L28.1 3.7" fill="none" stroke="#fff" stroke-width="1.55"/></svg>
<div style="position:absolute;left:718.8px;top:495px;width:50.700000000000045px;height:39.8px;background:#333333"></div>
<svg style="position:absolute;left:718px;top:495px" width="51" height="30"><path d="M7.5 3.7 L18.6 14.5 L7.5 25.3" fill="none" stroke="#fff" stroke-width="1.55"/></svg>
<div style="position:absolute;left:774px;top:495px;width:58px;height:39.8px;background:#333333"></div>
<svg style="position:absolute;left:796.9px;top:506.7px" width="11" height="14"><rect x="0" y="0" width="10.2" height="13.3" fill="#fff"/><rect x="1.3" y="2.3" width="7.6" height="1.1" fill="#333"/><rect x="1.3" y="5.2" width="7.6" height="6.8" fill="#333"/><rect x="3.2" y="7.1" width="3.9" height="1.05" fill="#fff"/><rect x="3.2" y="9.3" width="3.9" height="1.05" fill="#fff"/></svg>
<div style="position:absolute;left:844px;top:316px;width:62px;height:40.7px;background:#333333"></div>
<div style="position:absolute;left:848.90px;top:322.00px;font-size:17.29px;line-height:1;color:#fff;white-space:nowrap;transform:scaleX(1.052);transform-origin:0 0;">Home</div>
<div style="position:absolute;left:910px;top:316px;width:62px;height:40.7px;background:#333333"></div>
<div style="position:absolute;left:915.00px;top:321.00px;font-size:17.71px;line-height:1;color:#fff;white-space:nowrap;transform:scaleX(1.064);transform-origin:0 0;">PgUp</div>
<div style="position:absolute;left:980px;top:316px;width:62px;height:40.7px;background:#333333"></div>
<div style="position:absolute;left:985.10px;top:322.00px;font-size:17.29px;line-height:1;color:#fff;white-space:nowrap;transform:scaleX(1.094);transform-origin:0 0;">Nav</div>
<div style="position:absolute;left:844px;top:361px;width:62px;height:40.7px;background:#333333"></div>
<div style="position:absolute;left:848.90px;top:365.00px;font-size:18.57px;line-height:1;color:#fff;white-space:nowrap;transform:scaleX(0.939);transform-origin:0 0;">End</div>
<div style="position:absolute;left:910px;top:361px;width:62px;height:40.7px;background:#333333"></div>
<div style="position:absolute;left:915.00px;top:365.00px;font-size:17.29px;line-height:1;color:#fff;white-space:nowrap;transform:scaleX(1.074);transform-origin:0 0;">PgDn</div>
<div style="position:absolute;left:980px;top:361px;width:62px;height:40.7px;background:#333333"></div>
<div style="position:absolute;left:984.70px;top:366.00px;font-size:14.71px;line-height:1;color:#fff;white-space:nowrap;transform:scaleX(1.145);transform-origin:0 0;">Mv Up</div>
<div style="position:absolute;left:844px;top:406px;width:62px;height:40.7px;background:#333333"></div>
<div style="position:absolute;left:848.30px;top:409.00px;font-size:20.0px;line-height:1;color:#fff;white-space:nowrap;transform:scaleX(0.784);transform-origin:0 0;">Insert</div>
<div style="position:absolute;left:910px;top:406px;width:62px;height:40.7px;background:#333333"></div>
<div style="position:absolute;left:914.70px;top:409.00px;font-size:20.0px;line-height:1;color:#fff;white-space:nowrap;transform:scaleX(0.863);transform-origin:0 0;">Pause</div>
<div style="position:absolute;left:980px;top:406px;width:62px;height:40.7px;background:#333333"></div>
<div style="position:absolute;left:984.50px;top:412.00px;font-size:17.14px;line-height:1;color:#fff;white-space:nowrap;transform:scaleX(0.986);transform-origin:0 0;">Mv Dn</div>
<div style="position:absolute;left:844px;top:451px;width:62px;height:40.0px;background:#333333"></div>
<div style="position:absolute;left:848.50px;top:456.00px;font-size:18.43px;line-height:1;color:#fff;white-space:nowrap;transform:scaleX(0.891);transform-origin:0 0;">PrtScn</div>
<div style="position:absolute;left:910px;top:451px;width:62px;height:40.0px;background:#5d3d18"></div>
<div style="position:absolute;left:915.60px;top:455.00px;font-size:19.29px;line-height:1;color:#fff;white-space:nowrap;transform:scaleX(0.905);transform-origin:0 0;">ScrLk</div>
<div style="position:absolute;left:980px;top:451px;width:62px;height:40.0px;background:#333333"></div>
<div style="position:absolute;left:985.00px;top:455.00px;font-size:19.29px;line-height:1;color:#8a8a8a;white-space:nowrap;transform:scaleX(0.989);transform-origin:0 0;">Dock</div>
<div style="position:absolute;left:844px;top:498px;width:62px;height:36.8px;background:#333333"></div>
<div style="position:absolute;left:849.00px;top:503.00px;font-size:14.29px;line-height:1;color:#fff;white-space:nowrap;transform:scaleX(0.989);transform-origin:0 0;">Options</div>
<div style="position:absolute;left:910px;top:498px;width:62px;height:36.8px;background:#333333"></div>
<div style="position:absolute;left:914.70px;top:500.00px;font-size:19.0px;line-height:1;color:#fff;white-space:nowrap;transform:scaleX(1.004);transform-origin:0 0;">Help</div>
<div style="position:absolute;left:980px;top:495px;width:62px;height:39.8px;background:#333333"></div>
<div style="position:absolute;left:985.00px;top:498.00px;font-size:19.29px;line-height:1;color:#fff;white-space:nowrap;transform:scaleX(0.921);transform-origin:0 0;">Fade</div>
<svg style="position:absolute;left:0;top:0" width="1102" height="620"><line x1="788.2" y1="322.6" x2="884" y2="422" stroke="#f4412f" stroke-width="6" stroke-linecap="square"/><path d="M909 448.5 L869.5 433.5 L894.8 409 Z" fill="#f4412f"/></svg>
<div style="position:absolute;left:0;top:618px;width:1102px;height:1px;background:#fff"></div>
<div style="position:absolute;left:0;top:0;width:1102px;height:2px;background:#000"></div>
<div style="position:absolute;left:0;top:0;width:2px;height:620px;background:#000"></div>
<div style="position:absolute;left:1101px;top:0;width:1px;height:620px;background:#000"></div>
<div style="position:absolute;left:0;top:619px;width:1102px;height:1px;background:#000"></div>
</body></html>
